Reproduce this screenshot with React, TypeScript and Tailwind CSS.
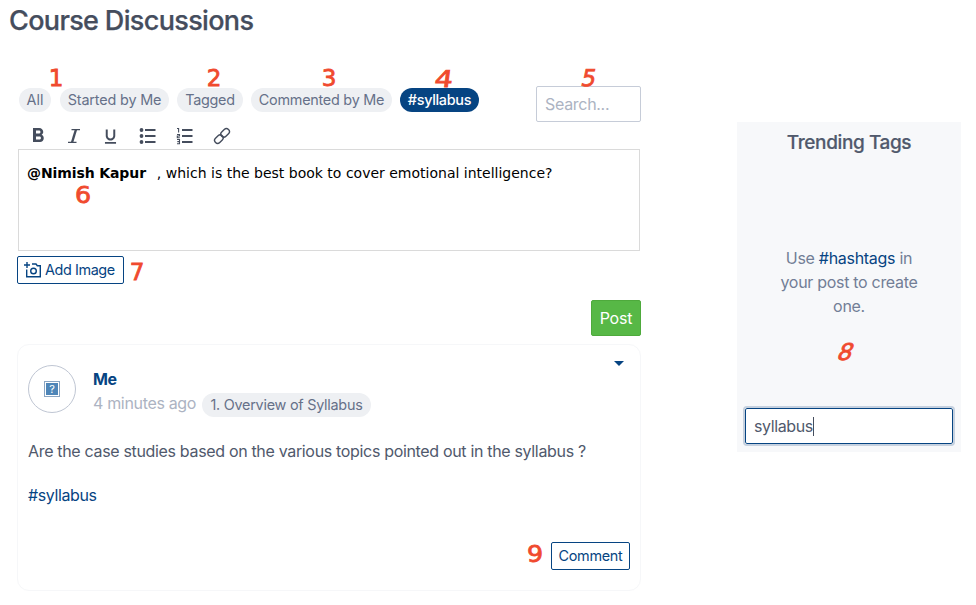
import type { ReactNode } from "react"
import { MdFormatBold, MdFormatUnderlined } from "react-icons/md"

interface ChipProps {
  children: ReactNode
  className: string
}

function Chip({ children, className }: ChipProps) {
  return (
    <span className={`flex h-6 shrink-0 items-center justify-center rounded-full text-[14.4px] whitespace-nowrap ${className}`}>
      {children}
    </span>
  )
}

function Marker({ children, className }: ChipProps) {
  return (
    <span
      className={`absolute flex h-5 w-5 items-center justify-center font-['DejaVu_Sans',sans-serif] text-[23px] leading-none text-[#f04a2e] [-webkit-text-stroke:0.8px_#f04a2e] ${className}`}
    >
      {children}
    </span>
  )
}

function ItalicIcon() {
  return (
    <svg width="14" height="16" viewBox="0 0 14 16" fill="none" stroke="currentColor">
      <path d="M4.5 1.6H13M1 14.4h8.5" strokeWidth="1.2" />
      <path d="M9 1.5 5 14.5" strokeWidth="2.4" />
    </svg>
  )
}

function BulletListIcon() {
  return (
    <svg width="18" height="16" viewBox="0 0 18 16" fill="currentColor">
      <circle cx="2.5" cy="2" r="1.9" />
      <circle cx="2.5" cy="8" r="1.9" />
      <circle cx="2.5" cy="14" r="1.9" />
      <path d="M6 1h10.5v2H6zM6 7h10.5v2H6zM6 13h10.5v2H6z" />
    </svg>
  )
}

function NumberListIcon() {
  return (
    <svg width="18" height="18" viewBox="0 0 18 18" fill="none" stroke="currentColor">
      <path d="M6 3h10.5M6 9h10.5M6 15h10.5" strokeWidth="1.9" />
      <path d="M1 1.5h1.6v4M1 7.5h2.5V9H1.3v1.7h2.5M1 12.5h2.5v4.2H1M1.3 14.6h2.2" strokeWidth="1.1" />
    </svg>
  )
}

function LinkIcon() {
  return (
    <svg width="18" height="18" viewBox="0 0 18 18" fill="none" stroke="currentColor" strokeWidth="1.4">
      <rect x="7.3" y="2.9" width="9.6" height="6" rx="3" transform="rotate(-45 12.1 5.9)" />
      <rect x="1.1" y="9.1" width="9.6" height="6" rx="3" transform="rotate(-45 5.9 12.1)" />
    </svg>
  )
}

function AddImageIcon() {
  return (
    <svg width="18" height="18" viewBox="0 0 18 18" fill="none" stroke="currentColor" strokeWidth="1.4">
      <path d="M3 1v6M0 4h6" />
      <path d="M2.7 8.5v7.2h13.6V4.7h-3L12 3H8" />
      <circle cx="9.5" cy="10" r="2.8" />
    </svg>
  )
}

export default function App() {
  return (
    <div className="relative h-[605px] w-[976px] overflow-hidden bg-white font-['Inter',sans-serif] text-[16px] leading-6 text-[#50596c]">
      <h1 className="h-10 pl-[9px] text-[27px] leading-[42px] font-medium tracking-[-0.65px] whitespace-nowrap text-[#454d5d] [-webkit-text-stroke:0.25px_#454d5d]">
        Course Discussions
      </h1>

      <div className="flex">
        <main className="w-[641px] shrink-0 pt-[46px] pl-[17px]">
          <div className="flex h-9">
            <div className="flex gap-2 pt-[2px] pl-[2px] text-[#667189]">
              <Chip className="mr-px w-8 bg-[#eef0f3]">All</Chip>
              <Chip className="w-[109px] bg-[#eef0f3] tracking-[-0.15px]">Started by Me</Chip>
              <Chip className="w-[66px] bg-[#eef0f3] tracking-[-0.3px]">Tagged</Chip>
              <Chip className="w-[141px] bg-[#eef0f3] tracking-[-0.25px]">Commented by Me</Chip>
              <Chip className="w-[79px] bg-[#064482] font-medium tracking-[-0.3px] text-white">#syllabus</Chip>
            </div>
            <input
              className="ml-auto h-9 w-[105px] rounded-[2px] border border-[#c6ccd8] px-2 tracking-[-0.3px] placeholder:text-[#acb3c2]"
              placeholder="Search..."
            />
          </div>

          <div className="flex h-[27px] items-center pt-px text-[#454d5d]">
            <button className="flex w-[41px] justify-center"><MdFormatBold size={24} /></button>
            <button className="flex w-[32px] justify-center"><ItalicIcon /></button>
            <button className="flex w-[40px] justify-center"><MdFormatUnderlined size={19} /></button>
            <button className="flex w-[36px] justify-center"><BulletListIcon /></button>
            <button className="flex w-[37px] justify-center"><NumberListIcon /></button>
            <button className="flex w-[38px] justify-center"><LinkIcon /></button>
          </div>

          <div className="ml-px h-[102px] w-[622px] border border-[#dadada] px-2 pt-[11px] font-['DejaVu_Sans',sans-serif] text-[14px] whitespace-pre text-black">
            <b className="mr-[2px] tracking-[-0.1px]">@Nimish Kapur</b>
            {"  , which is the best book to cover emotional intelligence?"}
          </div>

          <button className="mt-[5px] flex h-7 w-[107px] items-center gap-[3px] rounded-[2px] border border-[#064482] pl-[6px] text-[14.4px] tracking-[-0.4px] whitespace-nowrap text-[#064482]">
            <AddImageIcon />
            Add Image
          </button>

          <div className="mt-4 flex justify-end">
            <button className="h-9 w-[50px] rounded-[2px] border border-[#4eaa3c] bg-[#57b846] tracking-[-0.2px] text-white">Post</button>
          </div>

          <article className="mt-2 h-[247px] rounded-[12px] border border-[#f6f7f9] pt-5 pr-[10px] pl-[10px]">
            <div className="flex">
              <div className="flex h-12 w-12 items-center justify-center rounded-full border border-[#bfc6d3]">
                <div className="flex h-4 w-4 items-center justify-center border border-[#8ba6c3] bg-[#4f86b8] text-[11px] leading-none text-white outline outline-1 -outline-offset-2 outline-white">
                  ?
                </div>
              </div>
              <div className="ml-[17px] pt-[2px]">
                <div className="font-bold tracking-[-0.4px] text-[#064482]">Me</div>
                <div className="flex gap-[6px] text-[#acb3c2]">
                  <span className="w-[103px] tracking-[-0.33px] whitespace-nowrap">4 minutes ago</span>
                  <Chip className="relative top-[2px] w-[169px] bg-[#eef0f3] tracking-[-0.25px] text-[#667189]">
                    1. Overview of Syllabus
                  </Chip>
                </div>
              </div>
              <svg className="mr-[6px] mt-[-4px] ml-auto" width="10" height="5" viewBox="0 0 10 5">
                <path d="M0 0h10L5 5z" fill="#064482" />
              </svg>
            </div>
            <p className="mt-6 tracking-[-0.33px] whitespace-nowrap">
              Are the case studies based on the various topics pointed out in the syllabus ?
            </p>
            <p className="mt-5 tracking-[-0.4px] text-[#064482]">#syllabus</p>
            <div className="mt-[35px] flex justify-end">
              <button className="h-7 w-[79px] rounded-[2px] border border-[#064482] text-[14.4px] tracking-[-0.3px] text-[#064482]">
                Comment
              </button>
            </div>
          </article>
        </main>

        <aside className="mt-[82px] ml-24 flex h-[330px] w-56 flex-col bg-[#f7f8fa] px-2 pb-2 text-center">
          <h2 className="pt-[5px] text-[19px] leading-[31px] font-medium tracking-[-0.4px] [-webkit-text-stroke:0.2px_#50596c]">
            Trending Tags
          </h2>
          <p className="mt-[88px] px-8 tracking-[-0.3px] text-[#727e96]">
            Use <span className="text-[#064482]">#hashtags</span> in
            <br />
            your post to create
            <br />
            one.
          </p>
          <div className="mt-auto flex h-9 items-center rounded-[2px] border border-[#064482] bg-white px-2 tracking-[-0.4px] outline outline-2 outline-[#c6d1df]">
            syllabus
            <span className="h-[19px] w-px bg-[#454d5d]" />
          </div>
        </aside>
      </div>

      <Marker className="top-[68px] left-[46px]">1</Marker>
      <Marker className="top-[68px] left-[204px]">2</Marker>
      <Marker className="top-[68px] left-[319px]">3</Marker>
      <Marker className="top-[69px] left-[434px] scale-x-125 -skew-x-6">4</Marker>
      <Marker className="top-[68px] left-[579px] -skew-x-12">5</Marker>
      <Marker className="top-[185px] left-[73px] scale-x-110">6</Marker>
      <Marker className="top-[262px] left-[127px]">7</Marker>
      <Marker className="top-[342px] left-[836px] -skew-x-[20deg]">8</Marker>
      <Marker className="top-[544px] left-[525px] scale-x-110">9</Marker>
    </div>
  )
}
